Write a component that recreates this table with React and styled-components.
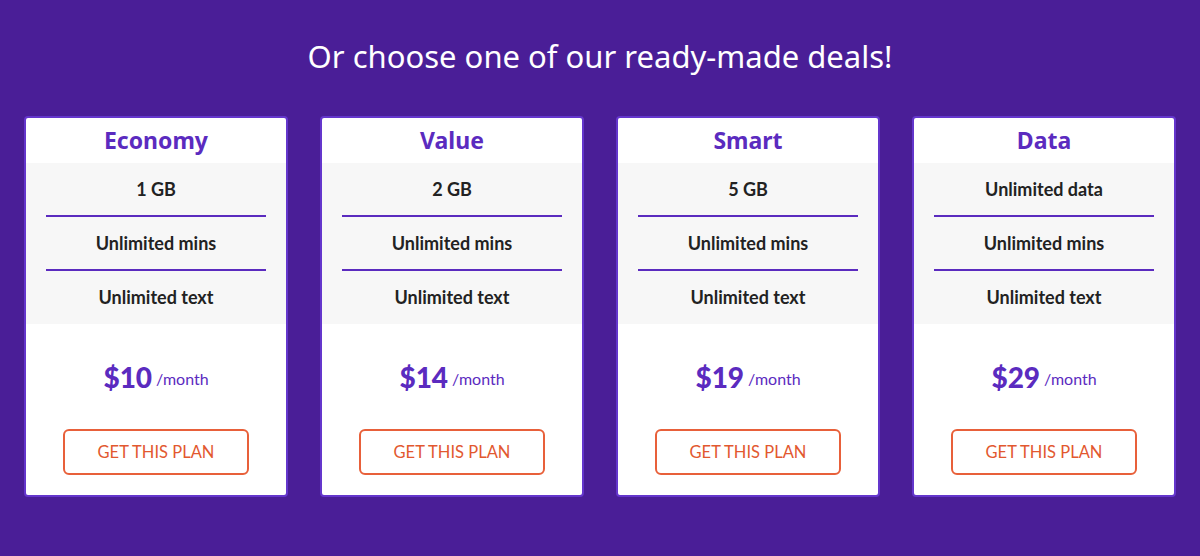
import React from "react";
import styled, { createGlobalStyle } from "styled-components";

const GlobalStyle = createGlobalStyle`
  body {
    margin: 0;
    background: #4a1e97;
    font-family: "Lato", "Noto Sans", sans-serif;
  }
`;

const Page = styled.div`
  padding: 36px 24px 59px;
`;

const Heading = styled.h2`
  margin: 0 0 40px;
  line-height: 40px;
  font-family: "Noto Sans", sans-serif;
  font-weight: 400;
  font-size: 31px;
  color: #ffffff;
  text-align: center;
`;

const Grid = styled.div`
  display: grid;
  grid-template-columns: repeat(4, 264px);
  justify-content: space-between;
`;

const Card = styled.div`
  box-sizing: border-box;
  background: #ffffff;
  border: 2px solid #6436cc;
  border-radius: 4px;
  display: flex;
  flex-direction: column;
  overflow: hidden;
`;

const Title = styled.h3`
  margin: 0;
  height: 45px;
  line-height: 45px;
  text-align: center;
  font-family: "Noto Sans", sans-serif;
  font-size: 23px;
  font-weight: 700;
  color: #5b2bbf;
`;

const Features = styled.ul`
  list-style: none;
  margin: 0;
  padding: 0 20px 1px;
  background: #f7f7f7;
`;

const Feature = styled.li`
  height: 52px;
  display: flex;
  align-items: center;
  justify-content: center;
  font-size: 18px;
  font-weight: 700;
  color: #222222;
  & + & {
    border-top: 2px solid #5b2bbf;
  }
`;

const Bottom = styled.div`
  display: flex;
  flex-direction: column;
  align-items: center;
  padding: 38px 0 20px;
`;

const Price = styled.div`
  height: 30px;
  display: flex;
  align-items: center;
  justify-content: center;
  color: #5b2bbf;
`;

const Amount = styled.span`
  font-size: 28px;
  font-weight: 900;
`;

const Period = styled.span`
  font-size: 16px;
  margin: 3px 0 0 4px;
`;

const Button = styled.button`
  margin-top: 37px;
  box-sizing: border-box;
  width: 186px;
  height: 46px;
  background: #ffffff;
  border: 2px solid #e8603a;
  border-radius: 6px;
  color: #e2582f;
  font-family: "Lato", "Noto Sans", sans-serif;
  font-size: 16.5px;
  cursor: pointer;
`;

const plans = [
  { name: "Economy", data: "1 GB", price: 10 },
  { name: "Value", data: "2 GB", price: 14 },
  { name: "Smart", data: "5 GB", price: 19 },
  { name: "Data", data: "Unlimited data", price: 29 },
];

export default function App() {
  return (
    <Page>
      <GlobalStyle />
      <Heading>Or choose one of our ready-made deals!</Heading>
      <Grid>
        {plans.map((plan) => (
          <Card key={plan.name}>
            <Title>{plan.name}</Title>
            <Features>
              <Feature>{plan.data}</Feature>
              <Feature>Unlimited mins</Feature>
              <Feature>Unlimited text</Feature>
            </Features>
            <Bottom>
              <Price>
                <Amount>${plan.price}</Amount>
                <Period>/month</Period>
              </Price>
              <Button>GET THIS PLAN</Button>
            </Bottom>
          </Card>
        ))}
      </Grid>
    </Page>
  );
}
